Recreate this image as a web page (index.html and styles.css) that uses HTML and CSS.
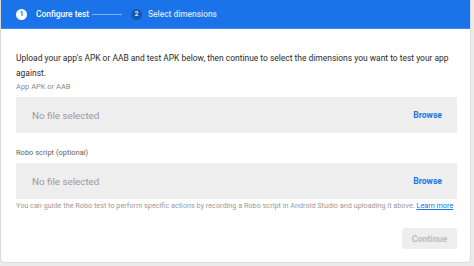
FILE: index.html
```html
<!DOCTYPE html>
<html>
<head>
<meta charset="utf-8">
<link rel="stylesheet" href="styles.css">
</head>
<body>
<div class="card">
  <div class="stepper">
    <div class="step active">
      <span class="num">1</span>
      <span class="label">Configure test</span>
    </div>
    <span class="connector"></span>
    <div class="step">
      <span class="num">2</span>
      <span class="label">Select dimensions</span>
    </div>
  </div>
  <div class="body">
    <p class="desc">Upload your app's APK or AAB and test APK below, then continue to select the dimensions you want to test your app against.</p>
    <div class="field-label">App APK or AAB</div>
    <div class="field">
      <span class="placeholder">No file selected</span>
      <span class="browse">Browse</span>
    </div>
    <div class="field-label dark">Robo script (optional)</div>
    <div class="field">
      <span class="placeholder">No file selected</span>
      <span class="browse">Browse</span>
    </div>
    <div class="helper">You can guide the Robo test to perform specific actions by recording a Robo script in Android Studio and uploading it above. <a class="link">Learn more</a></div>
    <div class="actions">
      <button class="continue">Continue</button>
    </div>
  </div>
</div>
</body>
</html>
```

FILE: styles.css
```css
html, body {
  margin: 0;
  padding: 0;
}
body {
  background: #ececec;
  font-family: Roboto, "Liberation Sans", sans-serif;
  width: 474px;
  height: 266px;
  overflow: hidden;
}
.card {
  width: 471px;
  height: 263px;
  background: #ffffff;
  border: 1px solid #dadada;
  border-top: none;
  border-radius: 0 0 5px 5px;
  box-sizing: border-box;
  overflow: hidden;
}
.stepper {
  height: 29px;
  background: #1a73e8;
  border-bottom: 1px solid #3c87ec;
  box-sizing: border-box;
  display: flex;
  align-items: center;
  padding-left: 15px;
}
.step {
  display: flex;
  align-items: center;
  gap: 6px;
}
.step.active {
  gap: 9px;
}
.num {
  width: 11px;
  height: 11px;
  border-radius: 50%;
  display: flex;
  align-items: center;
  justify-content: center;
  font-size: 6.5px;
  font-weight: 700;
  background: #1558b3;
  color: #e3ecfb;
}
.step.active .num {
  background: #ffffff;
  color: #1a73e8;
}
.label {
  font-size: 8.4px;
  font-weight: 500;
  color: rgba(255, 255, 255, 0.82);
}
.step.active .label {
  color: #ffffff;
}
.connector {
  width: 30px;
  height: 1px;
  background: rgba(255, 255, 255, 0.45);
  margin: 0 9px 0 3px;
}
.body {
  padding: 0 13px 0 15px;
}
.desc {
  margin: 22px 0 0 0;
  font-size: 8.45px;
  line-height: 15px;
  color: #2a2a2a;
}
.field-label {
  margin-top: 1px;
  font-size: 7.5px;
  line-height: 10px;
  color: #8a8a8a;
}
.field-label.dark {
  color: #5f5f5f;
  margin-top: 15px;
}
.field {
  margin-top: 5px;
  height: 36px;
  background: #eeeeee;
  display: flex;
  align-items: center;
  justify-content: space-between;
  padding: 0 15px 0 16px;
}
.placeholder {
  font-size: 9.8px;
  color: #9a9a9a;
}
.browse {
  font-size: 8.6px;
  font-weight: 700;
  color: #1a73e8;
}
.helper {
  margin-top: 2px;
  font-size: 7.28px;
  line-height: 10px;
  color: #9a9a9a;
  white-space: nowrap;
}
.link {
  color: #1a73e8;
  text-decoration: underline;
}
.actions {
  display: flex;
  justify-content: flex-end;
  margin-top: 17px;
}
.continue {
  width: 55px;
  height: 21px;
  border: none;
  border-radius: 3px;
  background: #eeeeee;
  color: #bdbdbd;
  font-family: Roboto, "Liberation Sans", sans-serif;
  font-size: 8.8px;
  font-weight: 700;
  padding: 0;
}
```
